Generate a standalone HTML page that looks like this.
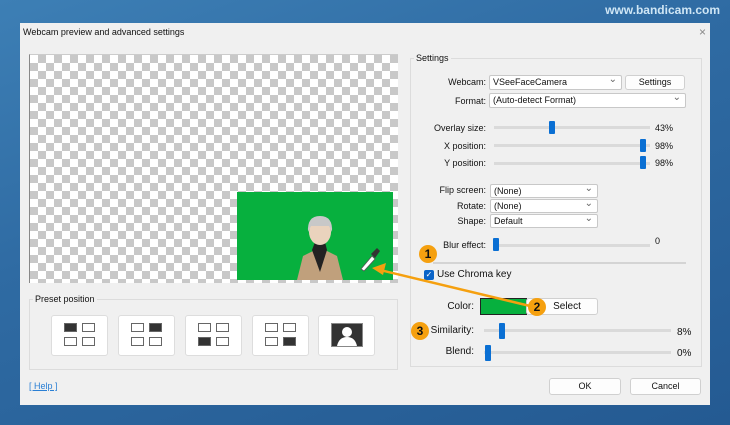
<!DOCTYPE html><html><head><style>
*{margin:0;padding:0;box-sizing:border-box}
body{width:730px;height:425px;overflow:hidden;position:relative;font-family:"Liberation Sans",sans-serif;font-size:9px;color:#111;background:linear-gradient(160deg,#3d7fb5 0%,#2f6ba3 40%,#245a92 100%)}
.a{position:absolute}
.dlg{left:20px;top:23px;width:690px;height:382px;background:#f0f0f0}
.chk{background-color:#fff;background-image:linear-gradient(45deg,#c8c8c8 25%,transparent 25%,transparent 75%,#c8c8c8 75%),linear-gradient(45deg,#c8c8c8 25%,transparent 25%,transparent 75%,#c8c8c8 75%);background-size:16px 16px;background-position:0 0,8px 8px}
.grp{border:1px solid #dcdcdc}
.lbl{text-align:right;width:80px}
.cb{background:#fff;border:1px solid #c8c8c8;border-radius:2px;padding-left:3px;line-height:13px}
.cb:after{content:"⌄";position:absolute;right:4px;top:-3px;color:#666;font-size:10px}
.tr{height:3px;background:#dadada}
.th{width:6px;height:13px;background:#0a6fd3;border-radius:1px}
.btn{background:#fdfdfd;border:1px solid #d0d0d0;border-radius:3px;text-align:center}
.pb{width:57px;height:41px;background:#fff;border:1px solid #ddd;border-radius:3px}
.sq{position:absolute;width:13px;height:9px;border:1px solid #666;background:#fff}
.sq.d{background:#333}
.circ{width:18px;height:18px;border-radius:50%;background:#f5a00f;color:#111;font-size:12px;font-weight:bold;text-align:center;line-height:18px}
</style></head><body>
<div class="a" style="right:10px;top:3px;color:#cfe6f5;font-size:12px;font-weight:bold">www.bandicam.com</div>
<div class="a dlg"></div>
<div class="a" style="left:23px;top:27px;font-size:9px">Webcam preview and advanced settings</div>
<div class="a" style="left:699px;top:25px;font-size:12px;color:#888">×</div>
<div class="a chk" style="left:29px;top:54px;width:369px;height:229px;border-left:1px solid #888;border-top:1px solid #ccc"></div>
<div class="a" style="left:237px;top:192px;width:156px;height:88px;background:#07b03e"></div>
<svg class="a" style="left:237px;top:192px" width="160" height="90">
<path d="M60 88 L66 64 L78 58 L88 58 L100 64 L106 88Z" fill="#c0a07c"/>
<path d="M75 58 L83 80 L90 58 L88 50 L78 50Z" fill="#222"/>
<ellipse cx="83" cy="40" rx="11" ry="13" fill="#ead3bd"/>
<path d="M71 40 Q70 24 83 24 Q96 24 95 40 L92 34 L74 34Z" fill="#c8c8c8"/>
<path d="M124 77 L135 64 L138 67 L127 79Z" fill="#fff" stroke="#555" stroke-width=".8"/>
<path d="M134 62 L140 56 L143 59 L138 66Z" fill="#333"/>
</svg>
<div class="a" style="left:33px;top:294px;background:#f0f0f0;padding:0 2px;z-index:2">Preset position</div>
<div class="a grp" style="left:29px;top:299px;width:369px;height:71px"></div>
<div class="a pb" style="left:51px;top:315px"></div>
<div class="a pb" style="left:118px;top:315px"></div>
<div class="a pb" style="left:185px;top:315px"></div>
<div class="a pb" style="left:252px;top:315px"></div>
<div class="a pb" style="left:318px;top:315px"></div>
<div class="sq d" style="left:64px;top:323px"></div><div class="sq" style="left:82px;top:323px"></div><div class="sq" style="left:64px;top:337px"></div><div class="sq" style="left:82px;top:337px"></div>
<div class="sq" style="left:131px;top:323px"></div><div class="sq d" style="left:149px;top:323px"></div><div class="sq" style="left:131px;top:337px"></div><div class="sq" style="left:149px;top:337px"></div>
<div class="sq" style="left:198px;top:323px"></div><div class="sq" style="left:216px;top:323px"></div><div class="sq d" style="left:198px;top:337px"></div><div class="sq" style="left:216px;top:337px"></div>
<div class="sq" style="left:265px;top:323px"></div><div class="sq" style="left:283px;top:323px"></div><div class="sq" style="left:265px;top:337px"></div><div class="sq d" style="left:283px;top:337px"></div>
<svg class="a" style="left:331px;top:323px" width="32" height="24"><rect x="0.5" y="0.5" width="31" height="23" fill="#333" stroke="#888"/><circle cx="16" cy="9" r="5" fill="#fff"/><path d="M6 23 Q8 14 16 14 Q24 14 26 23Z" fill="#fff"/></svg>
<div class="a" style="left:414px;top:53px;background:#f0f0f0;padding:0 2px;z-index:2">Settings</div>
<div class="a grp" style="left:410px;top:58px;width:292px;height:309px"></div>
<div class="a lbl" style="left:406px;top:77px">Webcam:</div>
<div class="a cb" style="left:489px;top:75px;width:133px;height:15px">VSeeFaceCamera</div>
<div class="a btn" style="left:625px;top:75px;width:60px;height:15px;line-height:13px">Settings</div>
<div class="a lbl" style="left:406px;top:96px">Format:</div>
<div class="a cb" style="left:489px;top:93px;width:197px;height:15px">(Auto-detect Format)</div>
<div class="a lbl" style="left:406px;top:123px">Overlay size:</div><div class="a tr" style="left:494px;top:126px;width:156px"></div><div class="a th" style="left:549px;top:121px"></div><div class="a" style="left:655px;top:123px">43%</div>
<div class="a lbl" style="left:406px;top:141px">X position:</div><div class="a tr" style="left:494px;top:144px;width:156px"></div><div class="a th" style="left:640px;top:139px"></div><div class="a" style="left:655px;top:141px">98%</div>
<div class="a lbl" style="left:406px;top:158px">Y position:</div><div class="a tr" style="left:494px;top:162px;width:156px"></div><div class="a th" style="left:640px;top:156px"></div><div class="a" style="left:655px;top:158px">98%</div>
<div class="a lbl" style="left:406px;top:185px">Flip screen:</div><div class="a cb" style="left:490px;top:184px;width:108px;height:14px">(None)</div>
<div class="a lbl" style="left:406px;top:201px">Rotate:</div><div class="a cb" style="left:490px;top:199px;width:108px;height:14px">(None)</div>
<div class="a lbl" style="left:406px;top:216px">Shape:</div><div class="a cb" style="left:490px;top:214px;width:108px;height:14px">Default</div>
<div class="a lbl" style="left:406px;top:240px">Blur effect:</div><div class="a tr" style="left:494px;top:244px;width:156px"></div><div class="a th" style="left:493px;top:238px"></div><div class="a" style="left:655px;top:236px">0</div>
<div class="a" style="left:433px;top:262px;width:253px;height:2px;background:#d4d4d4"></div>
<div class="a" style="left:424px;top:270px;width:10px;height:10px;background:#0a64c8;border-radius:2px;color:#fff;font-size:8px;line-height:10px;text-align:center">✓</div>
<div class="a" style="left:437px;top:269px;font-size:10px">Use Chroma key</div>
<div class="a lbl" style="left:394px;top:301px;font-size:10px">Color:</div>
<div class="a" style="left:480px;top:298px;width:47px;height:17px;background:#07b03e;border:1px solid #222"></div>
<div class="a btn" style="left:526px;top:298px;width:72px;height:17px;line-height:15px;font-size:10px;padding-left:10px">Select</div>
<div class="a lbl" style="left:394px;top:325px;font-size:10px">Similarity:</div><div class="a tr" style="left:484px;top:329px;width:187px"></div><div class="a th" style="left:499px;top:323px;height:16px"></div><div class="a" style="left:677px;top:327px;font-size:10px">8%</div>
<div class="a lbl" style="left:394px;top:346px;font-size:10px">Blend:</div><div class="a tr" style="left:484px;top:351px;width:187px"></div><div class="a th" style="left:485px;top:345px;height:16px"></div><div class="a" style="left:677px;top:348px;font-size:10px">0%</div>
<svg class="a" style="left:0;top:0" width="730" height="425"><path d="M530 306 L380 270" stroke="#f5a00f" stroke-width="2.5" fill="none"/><path d="M372 268 L386 263 L383 275Z" fill="#f5a00f"/></svg>
<div class="a circ" style="left:419px;top:245px">1</div>
<div class="a circ" style="left:528px;top:298px">2</div>
<div class="a circ" style="left:411px;top:322px">3</div>
<div class="a" style="left:29px;top:381px;color:#2a7fd4;text-decoration:underline">[ Help ]</div>
<div class="a btn" style="left:549px;top:378px;width:72px;height:17px;line-height:15px">OK</div>
<div class="a btn" style="left:630px;top:378px;width:71px;height:17px;line-height:15px">Cancel</div>
</body></html>
